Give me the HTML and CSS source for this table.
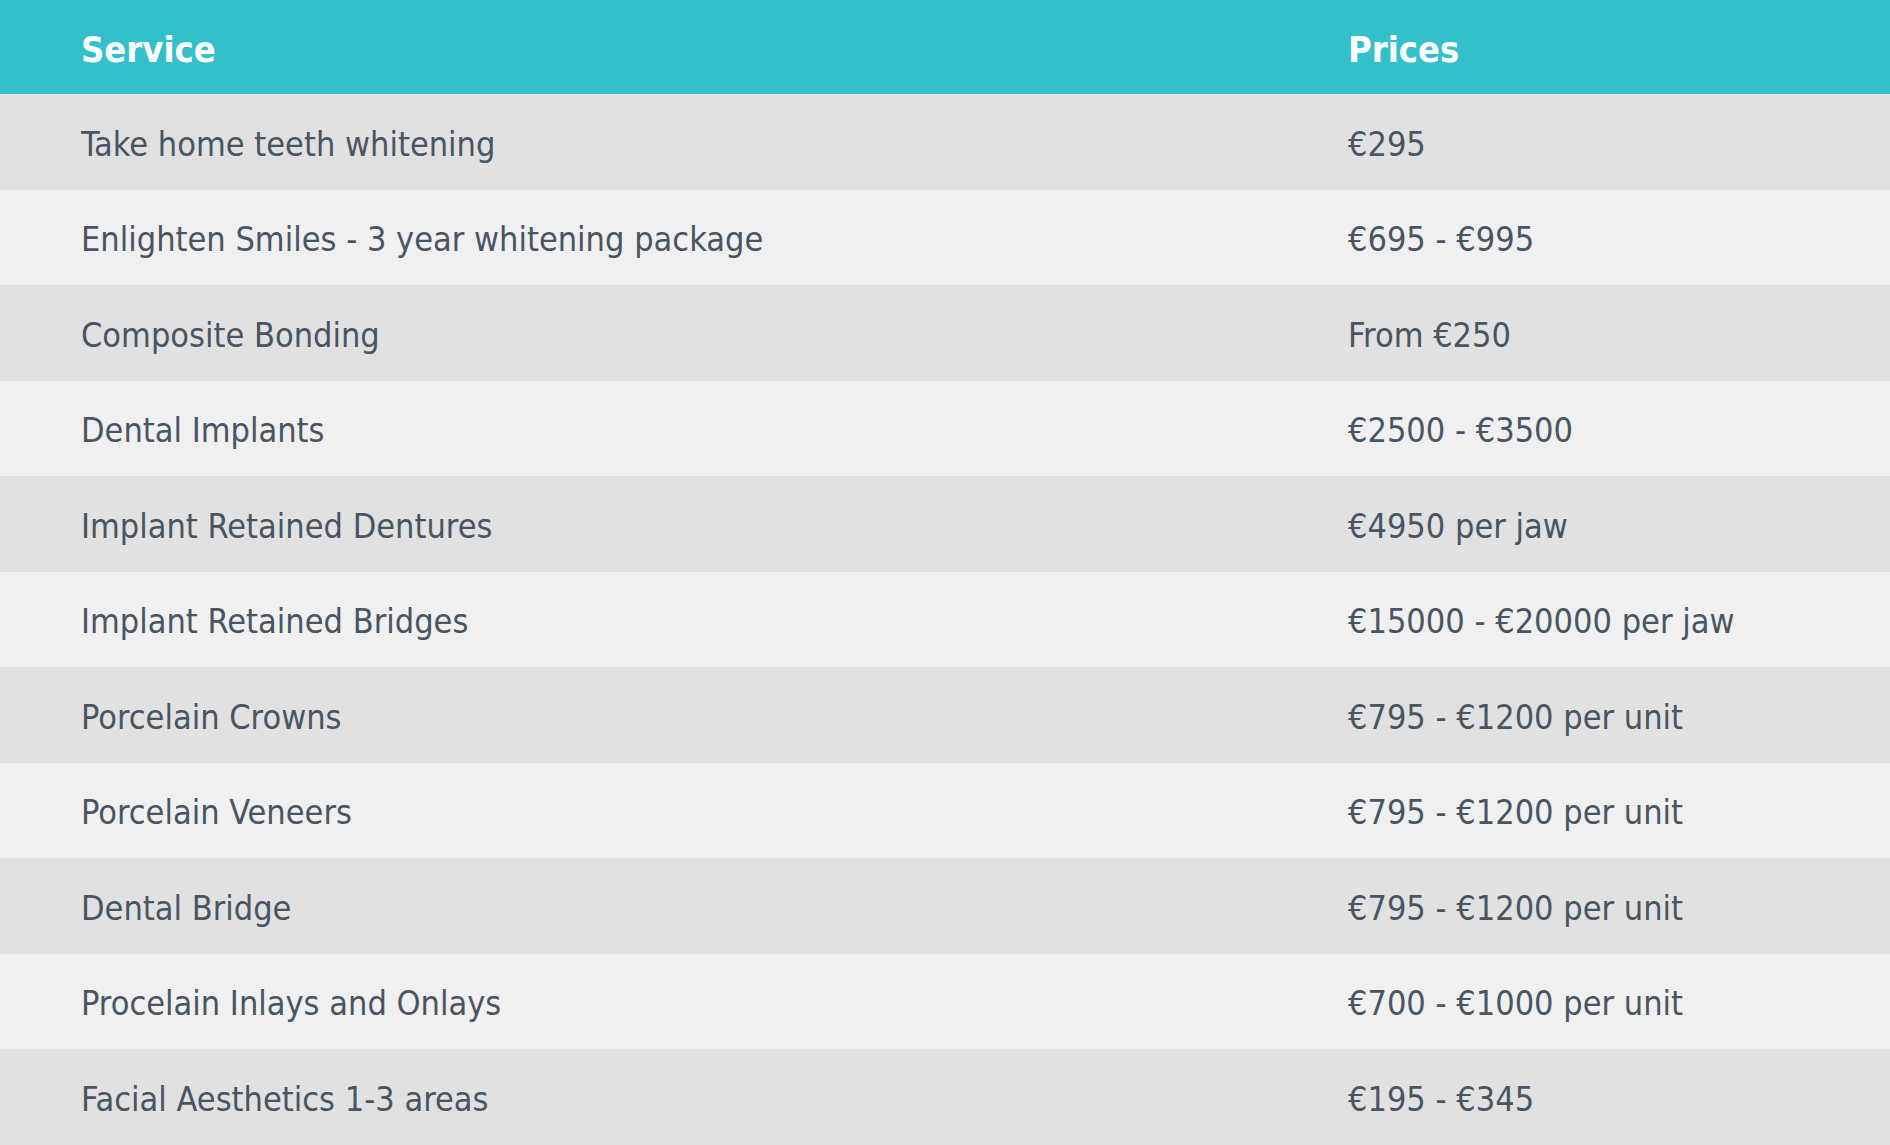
FILE: index.html
```html
<!DOCTYPE html>
<html lang="en">
<head>
<meta charset="utf-8">
<title>Prices</title>
<link rel="stylesheet" href="styles.css">
</head>
<body>
<table class="price-table">
  <thead>
    <tr><th class="col-service">Service</th><th class="col-price">Prices</th></tr>
  </thead>
  <tbody>
    <tr><td>Take home teeth whitening</td><td>€295</td></tr>
    <tr><td>Enlighten Smiles - 3 year whitening package</td><td>€695 - €995</td></tr>
    <tr><td>Composite Bonding</td><td>From €250</td></tr>
    <tr><td>Dental Implants</td><td>€2500 - €3500</td></tr>
    <tr><td>Implant Retained Dentures</td><td>€4950 per jaw</td></tr>
    <tr><td>Implant Retained Bridges</td><td>€15000 - €20000 per jaw</td></tr>
    <tr><td>Porcelain Crowns</td><td>€795 - €1200 per unit</td></tr>
    <tr><td>Porcelain Veneers</td><td>€795 - €1200 per unit</td></tr>
    <tr><td>Dental Bridge</td><td>€795 - €1200 per unit</td></tr>
    <tr><td>Procelain Inlays and Onlays</td><td>€700 - €1000 per unit</td></tr>
    <tr><td>Facial Aesthetics 1-3 areas</td><td>€195 - €345</td></tr>
  </tbody>
</table>
</body>
</html>
```
FILE: styles.css
```css
html, body {
  margin: 0;
  padding: 0;
  background: #f0f0f0;
}
body {
  font-family: "DejaVu Sans Condensed", "DejaVu Sans", sans-serif;
  color: #485562;
}
.price-table {
  width: 100%;
  border-collapse: collapse;
  table-layout: fixed;
}
.price-table th,
.price-table td {
  text-align: left;
  padding: 0 0 0 81px;
  vertical-align: middle;
  white-space: nowrap;
  box-sizing: border-box;
}
.col-service { width: 1267px; }
.price-table th {
  font-size: 36px;
  background: #34c0cb;
  color: #ffffff;
  font-weight: bold;
  height: 94px;
  padding-top: 5px;
}
.price-table td {
  font-size: 34px;
  height: 95.5px;
  padding-top: 4px;
}
.price-table tbody tr:nth-child(odd) { background: #e1e1e1; }
.price-table tbody tr:nth-child(even) { background: #f0f0f0; }
```
